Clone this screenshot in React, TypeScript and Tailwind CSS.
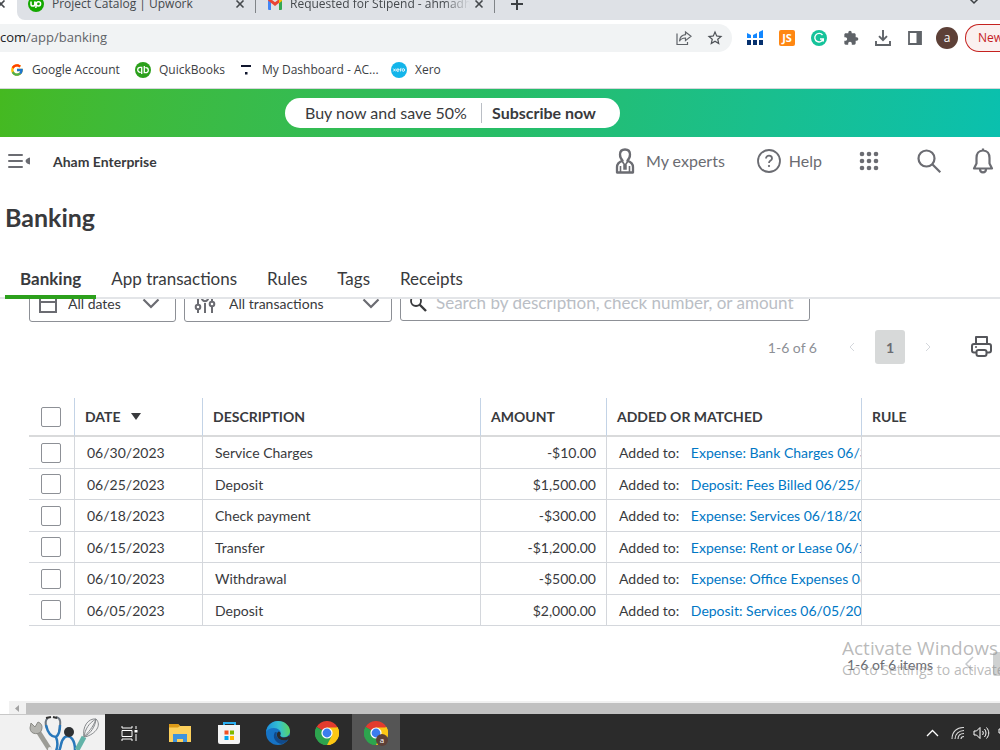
import { FcGoogle } from "react-icons/fc";
import { MdExtension, MdStarBorder } from "react-icons/md";

const bookmarks = [
	{ name: "Google Account", icon: <FcGoogle size={14} />, width: "w-[125px]" },
	{ name: "QuickBooks", icon: <QuickBooksIcon />, width: "w-[103px]" },
	{ name: "My Dashboard - AC...", icon: <DashboardIcon />, width: "w-[153px]" },
	{ name: "Xero", icon: <XeroIcon />, width: "w-[80px]" },
];

const tabs = ["Banking", "App transactions", "Rules", "Tags", "Receipts"];

const transactions = [
	{ date: "06/30/2023", description: "Service Charges", amount: "-$10.00", match: "Expense: Bank Charges 06/30/2023" },
	{ date: "06/25/2023", description: "Deposit", amount: "$1,500.00", match: "Deposit: Fees Billed 06/25/2023" },
	{ date: "06/18/2023", description: "Check payment", amount: "-$300.00", match: "Expense: Services 06/18/2023" },
	{ date: "06/15/2023", description: "Transfer", amount: "-$1,200.00", match: "Expense: Rent or Lease 06/15/2023" },
	{ date: "06/10/2023", description: "Withdrawal", amount: "-$500.00", match: "Expense: Office Expenses 06/10/2023" },
	{ date: "06/05/2023", description: "Deposit", amount: "$2,000.00", match: "Deposit: Services 06/05/2023" },
];

function UpworkIcon() {
	return (
		<svg width="16" height="16" viewBox="0 0 16 16">
			<circle cx="8" cy="8" r="8" fill="#14a800" />
			<path d="M3 5.5v2.7a1.9 1.9 0 0 0 3.8 0V5.5c.6 2 1.7 4.4 3.7 4.4a2.1 2.1 0 1 0-2.1-2.1L7.8 12" fill="none" stroke="#fff" strokeWidth="1.5" />
		</svg>
	);
}

function GmailIcon() {
	return (
		<svg width="14" height="12" viewBox="0 0 14 12">
			<path d="M0 2v9a1 1 0 0 0 1 1h2V4z" fill="#4285f4" />
			<path d="M14 2v9a1 1 0 0 1-1 1h-2V4z" fill="#34a853" />
			<path d="M0 2.5V2a1.5 1.5 0 0 1 2.5-1.2L7 4.2l4.5-3.4A1.5 1.5 0 0 1 14 2v.5L7 8z" fill="#ea4335" />
			<path d="M11 1.2l.5-.4A1.5 1.5 0 0 1 14 2v1l-3 2.2z" fill="#fbbc04" />
		</svg>
	);
}

function QuickBooksIcon() {
	return (
		<svg width="16" height="16" viewBox="0 0 16 16">
			<circle cx="8" cy="8" r="8" fill="#2ca01c" />
			<g fill="none" stroke="#fff" strokeWidth="1.3">
				<path d="M6.7 12V5.3H5.2a2.5 2.5 0 0 0 0 5h.5" />
				<path d="M9.3 4v6.7h1.5a2.5 2.5 0 0 0 0-5h-.5" />
			</g>
		</svg>
	);
}

function DashboardIcon() {
	return (
		<svg width="16" height="16" viewBox="0 0 16 16">
			<path d="M3 3h10v2H3zM7 10h2.5v2.5H7z" fill="#10162e" />
		</svg>
	);
}

function XeroIcon() {
	return (
		<svg width="16" height="16" viewBox="0 0 16 16">
			<circle cx="8" cy="8" r="8" fill="#13b5ea" />
			<g fill="none" stroke="#fff" strokeWidth=".9">
				<path d="M2.3 6.6l2.4 2.8M4.7 6.6L2.3 9.4M5.6 8h2.6a1.3 1.3 0 1 0-.5 1.2M9.4 9.5V6.8q.2-.6 1-.5" />
				<circle cx="12.3" cy="8" r="1.3" />
			</g>
		</svg>
	);
}

function CloseIcon() {
	return (
		<svg width="10" height="10" viewBox="0 0 10 10">
			<path d="M1.5 1.5l7 7M8.5 1.5l-7 7" stroke="#45494d" strokeWidth="1.6" />
		</svg>
	);
}

function ChromeIcon() {
	return (
		<svg width="24" height="24" viewBox="0 0 24 24">
			<path d="M12 12L1.6 6A12 12 0 0 1 22.4 6z" fill="#e33b2e" />
			<path d="M12 12l10.4-6A12 12 0 0 1 12 24z" fill="#fdc714" />
			<path d="M12 12v12A12 12 0 0 1 1.6 6z" fill="#2da44e" />
			<path d="M12 6.5h10.7A12 12 0 0 1 12 24l4.8-9.2z" fill="#fdc714" />
			<path d="M16.8 14.8L12 24A12 12 0 0 1 1.6 6l5.6 8.8z" fill="#2da44e" />
			<circle cx="12" cy="12" r="5.6" fill="#fff" />
			<circle cx="12" cy="12" r="4.4" fill="#3b7ded" />
		</svg>
	);
}

function BrowserTabs() {
	return (
		<div className="flex h-5 shrink-0 overflow-hidden bg-white">
			<div className="-mt-3 flex h-8 w-[17px] shrink-0 items-center">
				<button aria-label="Close tab" className="-ml-1"><CloseIcon /></button>
			</div>
			<div className="flex h-5 min-w-0 flex-1 rounded-bl-lg bg-[#dee1e6]">
				<div className="-mt-3 flex h-8 flex-1 items-center text-[12px] text-[#45494d]">
					<div className="flex w-[238px] shrink-0 items-center pl-[11px]">
						<UpworkIcon />
						<span className="ml-2 flex-1 whitespace-nowrap">Project Catalog | Upwork</span>
						<button aria-label="Close tab" className="mr-[10px]"><CloseIcon /></button>
					</div>
					<div className="flex w-[240px] shrink-0 items-center border-x border-[#808488] pl-3">
						<GmailIcon />
						<span className="mr-1 ml-2 flex-1 overflow-hidden mask-r-from-85% whitespace-nowrap">Requested for Stipend - ahmadhus</span>
						<button aria-label="Close tab" className="mr-[10px]"><CloseIcon /></button>
					</div>
					<button aria-label="New tab" className="ml-4">
						<svg width="12" height="12" viewBox="0 0 12 12"><path d="M6 0v12M0 6h12" stroke="#3c4043" strokeWidth="2" /></svg>
					</button>
					<button aria-label="Search tabs" className="mr-[21px] mb-1 ml-auto">
						<svg width="10" height="6" viewBox="0 0 10 6"><path d="M1 0l4 4 4-4" fill="none" stroke="#3c4043" strokeWidth="1.5" /></svg>
					</button>
				</div>
			</div>
		</div>
	);
}

function Toolbar() {
	return (
		<div className="flex h-9 shrink-0 items-center overflow-hidden">
			<div className="flex h-7 min-w-0 flex-1 items-center rounded-r-full bg-[#f1f3f4] pr-2">
				<div role="textbox" aria-label="Address" className="min-w-0 flex-1 text-[13px] whitespace-nowrap text-[#5f6368]">
					<span className="text-[#202124]">com</span>/app/banking
				</div>
				<button aria-label="Share">
					<svg width="16" height="16" viewBox="0 0 16 16" fill="none" stroke="#5f6368" strokeWidth="1.2">
						<path d="M1 3.5V14.5H11.5V12M9.5 2l5.5 4.3-5.5 4.3V8C6.5 8 4.6 9 3.5 11.2 3.8 7.5 6 5 9.5 4.7z" />
					</svg>
				</button>
				<button aria-label="Bookmark" className="ml-[14px]"><MdStarBorder size={18} color="#4d5156" /></button>
			</div>
			<div className="flex shrink-0 items-center gap-4 pl-[15px]">
				<svg width="16" height="16" viewBox="0 0 16 16">
					<path d="M0 3l4 2V8H0zM6 5l4-2V8H6zM12 2l4-2V8h-4z" fill="#1287ff" />
					<path d="M0 10h4v5H0zM6 10h4v5H6zM12 10h4v5h-4z" fill="#06316e" />
				</svg>
				<span className="flex size-4 items-center justify-center rounded-[2px] bg-[#ff8712] text-[11px] font-bold text-white">JS</span>
				<svg width="16" height="16" viewBox="0 0 16 16">
					<circle cx="8" cy="8" r="8" fill="#15c39a" />
					<path d="M11.5 5A4.3 4.3 0 1 0 12.2 9H9M12.3 8.5v3" fill="none" stroke="#fff" strokeWidth="1.4" />
				</svg>
				<MdExtension size={16} color="#5f6368" />
				<svg width="16" height="16" viewBox="0 0 16 16" fill="none" stroke="#5f6368" strokeWidth="1.9">
					<path d="M8 0v10M4 6.2l4 4 4-4M1 11v4h14v-4" />
				</svg>
				<svg width="16" height="16" viewBox="0 0 16 16">
					<path d="M2 2h12v12H2z" fill="none" stroke="#5f6368" strokeWidth="1.8" />
					<path d="M9.5 2H14v12H9.5z" fill="#5f6368" />
				</svg>
			</div>
			<span className="ml-[13px] flex size-[22px] shrink-0 items-center justify-center rounded-full bg-[#5d4037] text-[12px] text-white">a</span>
			<button className="ml-[7px] h-7 w-[35px] shrink-0 overflow-hidden rounded-l-full border border-r-0 border-[#c5221f] bg-[#faf0ef] pl-3 text-left text-[12px] whitespace-nowrap text-[#c5221f]">
				New
			</button>
		</div>
	);
}

function BookmarksBar() {
	return (
		<div className="flex h-[33px] shrink-0 items-center border-b border-[#d5d7da] pb-[5px] pl-[10px] text-[12px] text-[#3c4043]">
			{bookmarks.map((bookmark) => (
				<a key={bookmark.name} href="#" className={`flex h-6 items-center gap-2 whitespace-nowrap ${bookmark.width}`}>
					{bookmark.icon}
					{bookmark.name}
				</a>
			))}
		</div>
	);
}

function PromoBanner() {
	return (
		<div className="flex h-12 shrink-0 items-center bg-linear-100 from-[#45b920] via-[#27bd66] to-[#0ac0ae] pl-[285px]">
			<div className="flex h-[30px] items-center rounded-full bg-white px-5 text-[16px] whitespace-nowrap text-[#393a3d]">
				<span className="w-[166px]">Buy now and save 50%</span>
				<a href="#" className="ml-[10px] w-[119px] border-l border-[#babec5] pl-[10px] leading-5 font-bold">Subscribe now</a>
			</div>
		</div>
	);
}

function CompanyBar() {
	return (
		<header className="flex h-12 shrink-0 items-center pr-[6px] pl-2 text-[16px] text-[#6b6c72]">
			<button aria-label="Collapse menu">
				<svg width="22" height="16" viewBox="0 0 22 16">
					<path d="M1 2h13M1 8h13M1 14h13" stroke="#6b6c72" strokeWidth="2" strokeLinecap="round" />
					<path d="M22 4.500v7q-4-1-4.500-3.500 .5-2.500 4.500-3.500z" fill="#6b6c72" />
				</svg>
			</button>
			<span className="ml-[23px] flex-1 text-[14px] font-bold text-[#393a3d]">Aham Enterprise</span>
			<button className="flex items-center gap-[11px]">
				<svg width="20" height="26" viewBox="0 0 20 26" fill="none" stroke="#6b6c72" strokeWidth="2.3">
					<path d="M10 1.500C6.700 1.500 5 3.600 5 6.600c0 2.600 1 4.600 2.600 6C4 14 2 15.500 2 19v5.500h16V19c0-3.500-2-5-5.600-6.400C14 11.200 15 9.200 15 6.600c0-3-1.700-5.100-5-5.100z" strokeLinejoin="round" />
					<path d="M7 13l3 4.500 3-4.500M5.500 18v6M14.500 18v6" strokeWidth="1.600" />
					<path d="M9 17.500h2v3.500H9z" fill="#6b6c72" strokeWidth="1.500" />
				</svg>
				My experts
			</button>
			<button className="ml-8 flex items-center gap-2">
				<svg width="24" height="24" viewBox="0 0 24 24" fill="none" stroke="#6b6c72">
					<circle cx="12" cy="12" r="11" strokeWidth="1.8" />
					<path d="M9 9.500c0-3.800 6-3.800 6 0 0 2.200-3 2-3 4.500" strokeWidth="1.8" />
					<circle cx="12" cy="17" r=".7" fill="#6b6c72" />
				</svg>
				Help
			</button>
			<button aria-label="Apps" className="ml-9">
				<svg width="22" height="22" viewBox="0 0 22 22" fill="#6b6c72">
					{[4, 11, 18].map((y) => [4, 11, 18].map((x) => <circle key={`${x}-${y}`} cx={x} cy={y} r="2.3" />))}
				</svg>
			</button>
			<button aria-label="Search" className="ml-9">
				<svg width="26" height="26" viewBox="0 0 26 26" fill="none" stroke="#6b6c72" strokeWidth="2.2">
					<circle cx="10.5" cy="10.5" r="8" />
					<path d="M16.3 16.3l8 8" />
				</svg>
			</button>
			<button aria-label="Notifications" className="ml-[30px]">
				<svg width="22" height="26" viewBox="0 0 22 26" fill="none" stroke="#6b6c72" strokeWidth="2.2" strokeLinejoin="round">
					<path d="M11 2.5c-4.500 0-6.500 3.500-6.500 7.500v5.500L2 20.500h18l-2.500-5V10c0-4-2-7.500-6.500-7.500zM11 .5v2" />
					<path d="M8 21c0 4.500 6 4.500 6 0" />
				</svg>
			</button>
		</header>
	);
}

function Chevron() {
	return (
		<svg width="18" height="11" viewBox="0 0 18 11" className="shrink-0">
			<path d="M1.500 1.500L9 9l7.500-7.500" fill="none" stroke="#6b6c72" strokeWidth="2.200" />
		</svg>
	);
}

function Filters() {
	return (
		<div className="flex h-[23px] items-end overflow-hidden pl-[29px]">
			<label className="flex h-9 w-[147px] shrink-0 items-center rounded-[3px] border border-[#8d9096] pr-[15px] pb-px pl-[9px]">
				<svg width="18" height="18" viewBox="0 0 18 18" fill="none" stroke="#6b6c72" strokeWidth="2" className="shrink-0">
					<path d="M1 2h16v15H1zM1 7h16" />
				</svg>
				<select aria-label="Dates" className="ml-[11px] min-w-0 flex-1 appearance-none bg-transparent outline-none">
					<option>All dates</option>
				</select>
				<Chevron />
			</label>
			<label className="ml-2 flex h-9 w-[208px] shrink-0 items-center rounded-[3px] border border-[#8d9096] pr-[11px] pb-px pl-[9px]">
				<svg width="22" height="18" viewBox="0 0 22 18" fill="none" stroke="#6b6c72" strokeWidth="2" className="shrink-0">
					<path d="M4 0v9M4 15v3M11 8v10M18 0v6M18 12v6" />
					<circle cx="4" cy="12" r="2.300" />
					<path d="M7.500 2c.5 5.500 6.500 5.500 7 0" />
					<circle cx="18" cy="9" r="2.300" />
				</svg>
				<select aria-label="Transactions" className="ml-[13px] min-w-0 flex-1 appearance-none bg-transparent outline-none">
					<option>All transactions</option>
				</select>
				<Chevron />
			</label>
			<label className="mb-px ml-2 flex h-9 w-[410px] shrink-0 items-center rounded-[3px] border border-[#8d9096] pb-px pl-2">
				<svg width="18" height="18" viewBox="0 0 18 18" fill="none" stroke="#393a3d" strokeWidth="1.800" className="shrink-0">
					<circle cx="7" cy="7" r="5" />
					<path d="M10.500 10.500l6.500 6.500" strokeWidth="2.400" />
				</svg>
				<input aria-label="Search" placeholder="Search by description, check number, or amount" className="ml-[9px] min-w-0 flex-1 bg-transparent text-[17px] outline-none placeholder:text-[#babec5]" />
			</label>
		</div>
	);
}

function Pagination() {
	return (
		<div className="mt-2 flex h-[34px] items-center justify-end pr-2 text-[14px] text-[#8d9096]">
			<span>1-6 of 6</span>
			<button aria-label="Previous page" className="ml-8">
				<svg width="6" height="10" viewBox="0 0 6 10" fill="none" stroke="#d4d7dc"><path d="M5 1L1 5l4 4" /></svg>
			</button>
			<button className="mx-5 h-[34px] w-[30px] rounded-[3px] bg-[#d7d9d9] font-bold text-[#6b6c72]">1</button>
			<button aria-label="Next page">
				<svg width="6" height="10" viewBox="0 0 6 10" fill="none" stroke="#d4d7dc"><path d="M1 1l4 4-4 4" /></svg>
			</button>
			<button aria-label="Print" className="ml-10 pb-[2px]">
				<svg width="21" height="21" viewBox="0 0 21 21" fill="none" stroke="#55565b" strokeWidth="2" strokeLinejoin="round">
					<path d="M5 8V1h11v7M5 16.500H3a2 2 0 0 1-2-2V10a2 2 0 0 1 2-2h15a2 2 0 0 1 2 2v4.500a2 2 0 0 1-2 2h-2" />
					<rect x="5.500" y="14" width="10" height="6" rx="2" />
					<path d="M4 11h2" strokeWidth="1.500" />
				</svg>
			</button>
		</div>
	);
}

const checkbox = "block size-5 appearance-none rounded-[2px] border border-[#8d9096] bg-white checked:bg-[#2ca01c]";

function TransactionsTable() {
	const headCell = "border-r border-b-2 border-r-[#c3d3e6] border-b-[#d9dadb] px-[10px] font-bold";
	const cell = "overflow-hidden border-r border-b border-[#d4d7dc] whitespace-nowrap";

	return (
		<div className="mt-[34px] pl-[29px]">
			<table className="w-full table-fixed border-separate border-spacing-0 text-left text-[14px] text-[#393a3d]">
				<thead>
					<tr className="h-[39px]">
						<th className="w-[46px] border-r border-b-2 border-r-[#c3d3e6] border-b-[#d9dadb] pl-3">
							<input type="checkbox" aria-label="Select all" className={checkbox} />
						</th>
						<th className={`w-32 ${headCell}`}>
							<span className="flex items-center gap-[10px]">
								DATE
								<svg width="10" height="7" viewBox="0 0 10 7"><path d="M0 0h10L5 7z" fill="#393a3d" /></svg>
							</span>
						</th>
						<th className={`w-[278px] ${headCell}`}>DESCRIPTION</th>
						<th className={`w-[126px] ${headCell}`}>AMOUNT</th>
						<th className={`w-[255px] ${headCell}`}>ADDED OR MATCHED</th>
						<th className="border-b-2 border-[#d9dadb] pl-[10px]">RULE</th>
					</tr>
				</thead>
				<tbody>
					{transactions.map((row) => (
						<tr key={row.date} className="odd:h-8 even:h-[31px]">
							<td className="border-r border-b border-[#d4d7dc] pl-3">
								<input type="checkbox" aria-label={`Select ${row.date}`} className={checkbox} />
							</td>
							<td className={`pl-3 ${cell}`}>{row.date}</td>
							<td className={`pl-3 ${cell}`}>{row.description}</td>
							<td className={`pr-[10px] text-right ${cell}`}>{row.amount}</td>
							<td className={`pl-3 ${cell}`}>
								Added to: <a href="#" className="ml-2 text-[#0077c5]">{row.match}</a>
							</td>
							<td className="border-b border-[#d4d7dc]"></td>
						</tr>
					))}
				</tbody>
			</table>
		</div>
	);
}

function TableFooter() {
	return (
		<div className="mt-[26px] flex h-6 items-center justify-end text-[14px] text-[#6b6c72]">
			<span>1-6 of 6 items</span>
			<button aria-label="Previous" className="ml-8">
				<svg width="9" height="16" viewBox="0 0 9 16" fill="none" stroke="#c5c8cc" strokeWidth="1.5"><path d="M8 1L1 8l7 7" /></svg>
			</button>
			<span className="ml-[19px] h-6 w-[7px] rounded-l-[2px] bg-[#cfd1d1]"></span>
		</div>
	);
}

function Taskbar() {
	return (
		<footer className="flex h-9 shrink-0 bg-[#2b2b2b]">
			<div className="w-[105px] border-t border-[#c8c8c8] bg-[#f1f1f1]">
				<svg width="105" height="35" viewBox="0 0 105 35" fill="none">
					<path d="M36 13l14 22" stroke="#9c9c96" strokeWidth="5" />
					<path d="M31 8l4 4 3-5a6 6 0 1 1-8 6z" fill="#b5b5b0" stroke="#8b8b86" />
					<circle cx="50" cy="34" r="2" fill="#eee" />
					<path d="M48 3c-3 2-3 6-1 11M56 2c5 1 5 5 3 15" stroke="#6d7781" strokeWidth="2" />
					<path d="M46 10c2 9 5 12 10 12 4-3 4-8 4-12M56 22c2 5 2 9 0 14M59 36c3-6 1-10 6-14 6-3 10 4 10 13" stroke="#2878bb" strokeWidth="2.5" />
					<path d="M46 3l5-1M53 2l4 1" stroke="#333" strokeWidth="2" />
					<circle cx="69" cy="17" r="5" fill="#2d3033" />
					<path d="M84 22C82 12 88 3 96 4c6 6 0 15-11 18M84 22c1-8 5-14 12-18M84 22c7-4 11-10 12-18M84 22c4-5 9-9 12-18" stroke="#85888b" />
					<path d="M84 22L77 35" stroke="#62b3a8" strokeWidth="5" />
				</svg>
			</div>
			<div className="flex flex-1 items-center pt-[2px] text-white">
				<button aria-label="Task view" className="ml-4">
					<svg width="17" height="17" viewBox="0 0 17 17" fill="none" stroke="#fff">
						<path d="M1 1v2h10V1M1 5.5h10v6H1zM1 16v-2h10v2M15 1v3M15 9v7" />
						<path d="M13.5 5h3v2.5h-3z" fill="#fff" stroke="none" />
					</svg>
				</button>
				<button aria-label="File Explorer" className="ml-[31px]">
					<svg width="22" height="20" viewBox="0 0 22 20">
						<path d="M0 1h9l2 2h11v16H0z" fill="#fcd05c" />
						<path d="M0 1h9l2 2-2 1.5H0z" fill="#dc9a18" />
						<path d="M4 19v-8h14v8h-4v-3H8v3z" fill="#3e93dc" />
					</svg>
				</button>
				<button aria-label="Store" className="ml-[26px]">
					<svg width="24" height="24" viewBox="0 0 24 24">
						<path d="M7 5V2h11v3" fill="none" stroke="#2aaef0" strokeWidth="2" />
						<path d="M1 4h22v17a2 2 0 0 1-2 2H3a2 2 0 0 1-2-2z" fill="#f4f4f4" />
						<path d="M7.5 9.5h4v4h-4z" fill="#f25022" />
						<path d="M13 9.5h4v4h-4z" fill="#7fba00" />
						<path d="M7.5 15h4v4h-4z" fill="#00a4ef" />
						<path d="M13 15h4v4h-4z" fill="#ffb900" />
					</svg>
				</button>
				<button aria-label="Edge" className="ml-[25px]">
					<svg width="24" height="24" viewBox="0 0 24 24">
						<defs>
							<linearGradient id="edge" x1="0" y1=".5" x2="1" y2=".4">
								<stop offset="0" stopColor="#1a8ee0" />
								<stop offset=".55" stopColor="#35c1d0" />
								<stop offset="1" stopColor="#5bd65c" />
							</linearGradient>
						</defs>
						<circle cx="12" cy="12" r="12" fill="#1673c5" />
						<path d="M0 11C1 4 6 0 12 0c7 0 12 5 12 10 0 4-3 6-6 6-3 0-4.5-1-3.500-2.500C16 10 12 7 8 7c-4 0-7 2-8 4z" fill="url(#edge)" />
						<path d="M9 11c-3 5 0 11 7 12 3-1 5-3 6.5-5-5 2.500-11 1-12-3.500-.2-1 0-2 .5-3z" fill="#114a8b" />
						<path d="M14.5 13.5C13.500 15 15 16.500 18 16.500c2 0 4-.7 5.300-2.500l.7 3-3 2c-4 1-9 0-10-4-.5-2 .3-4 1.500-4.500 1.500 0 2.500 1.500 2 3z" fill="#2b2b2b" />
					</svg>
				</button>
				<button aria-label="Chrome" className="ml-[25px]"><ChromeIcon /></button>
				<button aria-label="Chrome, profile a" className="relative -mt-[2px] ml-[13px] flex h-9 w-12 items-center justify-center bg-[#555] pt-[2px]">
					<ChromeIcon />
					<span className="absolute right-3 bottom-1 flex size-3 items-center justify-center rounded-full bg-[#5d4037] text-[8px] text-white">a</span>
				</button>
				<div className="ml-auto flex items-center gap-3 overflow-hidden">
					<svg width="13" height="8" viewBox="0 0 13 8" fill="none" stroke="#fff" strokeWidth="1.3"><path d="M1 7l5.500-5.500L12 7" /></svg>
					<svg width="14" height="14" viewBox="0 0 14 14" fill="none" stroke="#ddd" strokeWidth="1.1">
						<path d="M1 13C1 6 6 1 13 1.500M4 13c0-5 4-8.500 9-8.500M7 13c0-3.500 2.500-5.500 6-5.500M10 13c0-1.500 1-2.500 3-2.500" />
					</svg>
					<svg width="17" height="14" viewBox="0 0 17 14" fill="none" stroke="#fff" className="-ml-1">
						<path d="M1 5h2.500L7 1.500v11L3.500 9H1zM9.500 5c1 1.200 1 2.800 0 4M11.500 3c2 2.500 2 5.500 0 8M13.500 1.500c3 3.500 3 7.500 0 11" />
					</svg>
					<svg width="2" height="14" viewBox="0 0 2 14" fill="none" stroke="#fff" className="-ml-1"><path d="M2 3H1v4h1" /></svg>
				</div>
			</div>
		</footer>
	);
}

export default function App() {
	return (
		<div className="flex h-screen flex-col overflow-hidden bg-white font-['Open_Sans',sans-serif]">
			<BrowserTabs />
			<Toolbar />
			<BookmarksBar />
			<div className="relative flex min-h-0 flex-1 flex-col overflow-hidden font-['Lato',sans-serif] text-[14px] text-[#393a3d]">
				<PromoBanner />
				<CompanyBar />
				<h1 className="mt-4 pl-[5px] text-[25px] leading-8 font-bold">Banking</h1>
				<nav className="mt-8 flex h-[34px] shrink-0 border-b-2 border-[#e3e5e8] pl-[5px] text-[17px]">
					{tabs.map((tab) => (
						<a
							key={tab}
							href="#"
							className={`h-[34px] px-[15px] leading-7 ${tab === "Banking" ? "border-b-4 border-[#2ca01c] font-bold" : ""}`}
						>
							{tab}
						</a>
					))}
				</nav>
				<main className="min-h-0 flex-1 overflow-hidden">
					<Filters />
					<Pagination />
					<TransactionsTable />
					<TableFooter />
				</main>
				<div className="ml-[9px] flex h-[13px] shrink-0 items-end border-t-2 border-[#f1f1f1] bg-[#f1f1f1]">
					<svg width="17" height="11" viewBox="0 0 17 11"><path d="M10 2v7L6 5.500z" fill="#a3a3a3" /></svg>
					<div className="h-[11px] flex-1 bg-[#c1c1c1]"></div>
				</div>
				<div className="pointer-events-none absolute right-0 bottom-[34px] w-[158px] overflow-hidden font-['Open_Sans',sans-serif] whitespace-nowrap text-[#8c8c8c]/60">
					<p className="text-[19px] leading-6">Activate Windows</p>
					<p className="text-[14px] leading-5">Go to Settings to activate Windows.</p>
				</div>
			</div>
			<Taskbar />
		</div>
	);
}
